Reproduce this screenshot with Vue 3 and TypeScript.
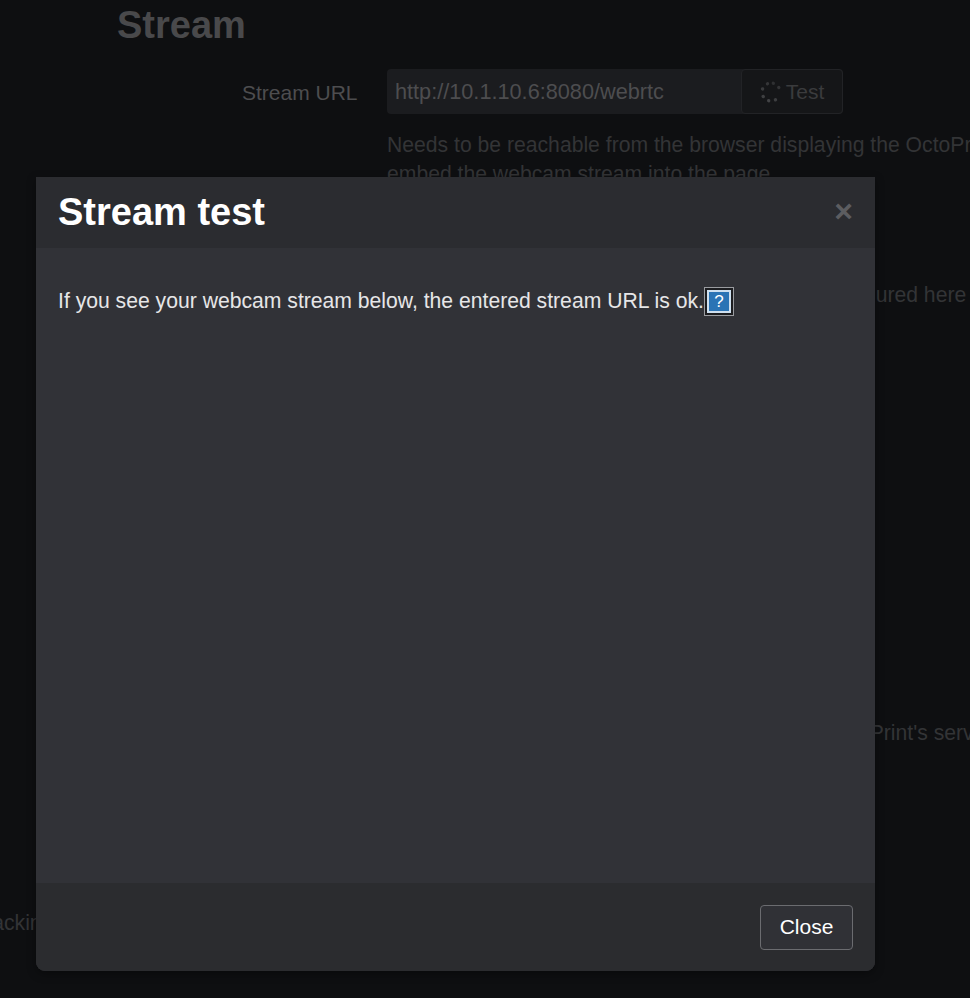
<script setup lang="ts">
const spinnerDots = [
  { angle: 15, fill: '#2f3032' },
  { angle: 60, fill: '#333436' },
  { angle: 150, fill: '#3d3e40' },
  { angle: 195, fill: '#424345' },
  { angle: 240, fill: '#3f4042' },
  { angle: 290, fill: '#3a3b3d' },
  { angle: 337, fill: '#353638' },
]
</script>

<template>
  <div class="page">
    <div class="backdrop-content">
      <h2 class="section-title">Stream</h2>
      <div class="url-row">
        <label class="url-label">Stream URL</label>
        <div class="input-group">
          <span class="url-value">http://10.1.10.6:8080/webrtc</span>
          <button class="test-btn" type="button">
            <svg class="spinner" width="22" height="22" viewBox="0 0 22 22">
              <circle
                v-for="d in spinnerDots"
                :key="d.angle"
                cx="11"
                cy="2"
                r="1.7"
                :fill="d.fill"
                :transform="`rotate(${d.angle} 11 11)`"
              />
            </svg>
            <span>Test</span>
          </button>
        </div>
      </div>
      <p class="help first">Needs to be reachable from the browser displaying the OctoPrint UI, used to</p>
      <p class="help second">embed the webcam stream into the page.</p>
      <p class="help third">Aspect ratio and stream profile can be configured here</p>
      <p class="help fourth">Needs to be reachable from OctoPrint's server</p>
      <p class="help fifth">Enable stream tracking</p>
    </div>

    <section class="modal">
      <header class="modal-header">
        <h3 class="modal-title">Stream test</h3>
        <span class="close-x">×</span>
      </header>
      <div class="modal-body">
        <p class="message">If you see your webcam stream below, the entered stream URL is ok.<span class="help-icon">?</span></p>
      </div>
      <footer class="modal-footer">
        <button class="close-btn" type="button">Close</button>
      </footer>
    </section>
  </div>
</template>

<style>
html,
body {
  margin: 0;
  background: #0e0f11;
}
</style>

<style scoped>
.page {
  position: relative;
  width: 970px;
  height: 998px;
  overflow: hidden;
  background: #0e0f11;
  font-family: "Liberation Sans", Arial, sans-serif;
}
.backdrop-content {
  padding: 0 0 0 117px;
  white-space: nowrap;
}
.section-title {
  margin: 0;
  padding-top: 4px;
  font-size: 38px;
  line-height: 42px;
  font-weight: 700;
  color: #49494b;
}
.url-row {
  display: flex;
  align-items: center;
  margin-top: 23px;
}
.url-label {
  width: 240.5px;
  padding-top: 2px;
  text-align: right;
  font-size: 21px;
  color: #4d4d4f;
}
.input-group {
  display: flex;
  align-items: center;
  justify-content: space-between;
  width: 456px;
  height: 45px;
  margin-left: 29.5px;
  border-radius: 4px;
  background: #1b1c1f;
  box-sizing: border-box;
}
.url-value {
  padding-left: 8px;
  font-size: 21.7px;
  color: #4d4d4f;
}
.test-btn {
  display: flex;
  align-items: center;
  justify-content: center;
  gap: 4px;
  width: 102px;
  height: 45px;
  padding: 0;
  border: 1px solid #222326;
  border-radius: 4px;
  background: #151618;
  color: #3a3b3d;
  font: inherit;
  font-size: 21px;
}
.help {
  margin: 0 0 0 270px;
  font-size: 21.17px;
  line-height: 29px;
  color: #333436;
}
.first {
  margin-top: 16px;
}
.third {
  margin-top: 92px;
  margin-left: 340px;
}
.fourth {
  margin-top: 409px;
  margin-left: 441px;
}
.fifth {
  margin-top: 161px;
  margin-left: -280px;
}
.modal {
  position: absolute;
  left: 36px;
  top: 177px;
  display: flex;
  flex-direction: column;
  width: 839px;
  height: 794px;
  border-radius: 0 0 9px 9px;
  overflow: hidden;
  background: #313237;
  box-shadow: 0 3px 10px rgba(0, 0, 0, 0.35);
}
.modal-header {
  display: flex;
  align-items: center;
  justify-content: space-between;
  height: 71px;
  padding: 0 22px;
  background: #2b2c30;
}
.modal-title {
  margin: 0;
  font-size: 38px;
  font-weight: 700;
  color: #fff;
}
.close-x {
  position: relative;
  top: -2px;
  font-size: 32px;
  font-weight: 700;
  line-height: 1;
  color: #5c5d60;
}
.modal-body {
  flex: 1;
  padding: 38px 22px 0;
}
.message {
  margin: 0;
  font-size: 21.17px;
  line-height: 30px;
  color: #e6e6e7;
  white-space: nowrap;
}
.help-icon {
  display: inline-block;
  vertical-align: middle;
  width: 20px;
  height: 19px;
  margin: -1px 4px 0 3px;
  border: 2px solid #cfe0ef;
  background: #2b74b5;
  color: #fff;
  font-size: 17px;
  line-height: 19px;
  text-align: center;
  box-shadow: 0 0 0 2px #1c1d20, 0 0 0 3px #9a9ca0;
}
.modal-footer {
  display: flex;
  align-items: center;
  justify-content: flex-end;
  height: 88px;
  padding: 0 22px;
  background: #2b2c2f;
}
.close-btn {
  width: 93px;
  height: 45px;
  padding: 0;
  border: 1px solid #6b6c70;
  border-radius: 4px;
  background: #303136;
  color: #fff;
  font: inherit;
  font-size: 21px;
}
</style>
